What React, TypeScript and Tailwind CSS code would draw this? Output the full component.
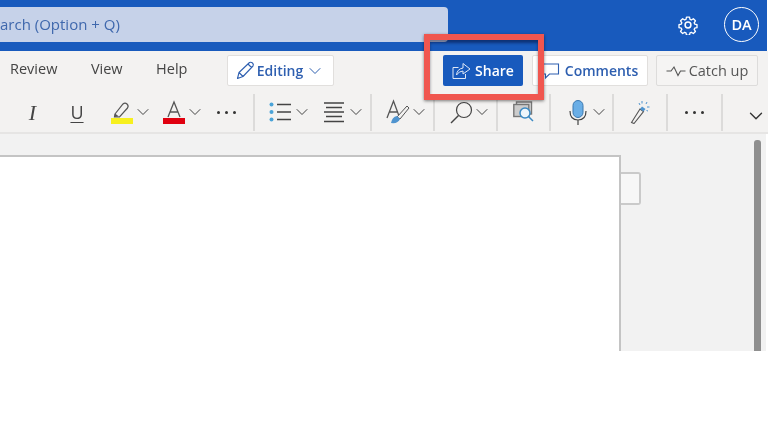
import { ReactNode } from "react";
import { ChevronDown } from "lucide-react";

const font = "font-['Open_Sans','Noto_Sans',sans-serif]";

const Chev = () => <ChevronDown size={20} strokeWidth={1.2} className="text-[#444] shrink-0" />;

const Sep = ({ className = "" }: { className?: string }) => (
  <div className={`w-[2px] h-[37px] bg-[#dcdbda] shrink-0 ${className}`} />
);

const Cell = ({ w, children }: { w: number; children: ReactNode }) => (
  <div style={{ width: w }} className="flex items-center justify-center shrink-0 h-full">
    {children}
  </div>
);

const Gap = ({ w }: { w: number }) => <div style={{ width: w }} className="shrink-0" />;

const Dots = () => (
  <div className="flex gap-[5px]">
    <span className="w-[3px] h-[3px] rounded-full bg-[#333]" />
    <span className="w-[3px] h-[3px] rounded-full bg-[#333]" />
    <span className="w-[3px] h-[3px] rounded-full bg-[#333]" />
  </div>
);

const Highlighter = () => (
  <svg width="24" height="26" viewBox="0 0 24 26" fill="none">
    <path d="M5 15 L13 5 Q15 3 17 5 Q19 7 17.500 9 L9.500 18 L4.500 18 Z" stroke="#555" strokeWidth="1.200" />
    <path d="M4.500 18 L5 14.500 L9 17.500 Z" fill="#555" />
    <rect x="1" y="19" width="22" height="6" fill="#f7f01e" />
  </svg>
);

const FontColor = () => (
  <svg width="24" height="26" viewBox="0 0 24 26" fill="none">
    <path d="M6 18 L12 3 L18 18 M8 13 L16 13" stroke="#555" strokeWidth="1.300" />
    <rect x="1" y="19" width="22" height="6" fill="#e0000f" />
  </svg>
);

const BulletList = () => (
  <svg width="23" height="20" viewBox="0 0 23 20">
    <circle cx="2.500" cy="2.500" r="2" fill="#4aa3d8" />
    <circle cx="2.500" cy="10" r="2" fill="#4aa3d8" />
    <circle cx="2.500" cy="17.500" r="2" fill="#4aa3d8" />
    <path d="M8 2.500 H22 M8 10 H22 M8 17.500 H22" stroke="#444" strokeWidth="1.300" />
  </svg>
);

const AlignLines = () => (
  <svg width="22" height="21" viewBox="0 0 22 21">
    <path d="M1 1 H21 M3 5.500 H19 M1 10 H21 M3 14.500 H19 M1 19.500 H21" stroke="#444" strokeWidth="1.300" />
  </svg>
);

const Styles = () => (
  <svg width="24" height="26" viewBox="0 0 24 26" fill="none">
    <path d="M1 19 L7.500 2 L13 17 M3.500 13 L11.500 13" stroke="#555" strokeWidth="1.300" />
    <path d="M11 18 L21 7 L23 9 L14 20 Z" stroke="#555" strokeWidth="1" fill="#f3f2f1" />
    <path d="M5 24 Q6 18 11 17 L14 20 Q12 25 5 24 Z" fill="#4f94cf" />
  </svg>
);

const Search = () => (
  <svg width="23" height="23" viewBox="0 0 23 23" fill="none">
    <circle cx="14" cy="9" r="7.500" stroke="#444" strokeWidth="1.200" />
    <path d="M8.500 14.500 L1 22" stroke="#444" strokeWidth="1.400" />
  </svg>
);

const Editor = () => (
  <svg width="22" height="22" viewBox="0 0 22 22" fill="none">
    <rect x="3.500" y="1" width="15" height="12" fill="#ddd" stroke="#777" strokeWidth="1.400" />
    <rect x="0.800" y="3.500" width="15" height="12" fill="#ccc" stroke="#777" strokeWidth="1.400" />
    <circle cx="12" cy="12" r="5" fill="#eef6fb" stroke="#3b8ac4" strokeWidth="1.500" />
    <path d="M15.500 15.500 L20 20" stroke="#3b8ac4" strokeWidth="1.500" />
  </svg>
);

const Mic = () => (
  <svg width="18" height="25" viewBox="0 0 18 25" fill="none">
    <rect x="4" y="0.500" width="10" height="17" rx="5" fill="#6aaee6" stroke="#3b78b0" />
    <path d="M1 11 Q1 20 9 20 Q17 20 17 11 M9 20 V25" stroke="#444" strokeWidth="1.200" />
  </svg>
);

const Wand = () => (
  <svg width="20" height="24" viewBox="0 0 20 24" fill="none">
    <path d="M1.500 22.500 L10 9 L13.500 11.500 L4 23.500 Z" fill="#f3f2f1" stroke="#555" strokeWidth="1.100" />
    <path d="M10 9 L12 6.500 L15.500 9 L13.500 11.500 Z" fill="#4f94cf" />
    <path d="M12 1 V3.500 M17 2 L16 4 M19.500 7 H17 M9 3 L10 5 M18 11 L16.500 10.500" stroke="#4f94cf" strokeWidth="1" />
  </svg>
);

const Gear = () => (
  <svg width="20" height="20" viewBox="0 0 24 24" fill="none" stroke="white" strokeWidth="1.800" strokeLinejoin="round">
    <path d="M10 1.500h4l.7 3.100 1.700.7 2.700-1.700 2.800 2.800-1.700 2.700.7 1.700 3.100.7v4l-3.100.7-.7 1.700 1.700 2.700-2.800 2.800-2.700-1.700-1.700.7-.7 3.100h-4l-.7-3.100-1.700-.7-2.700 1.700-2.800-2.800 1.700-2.700-.7-1.700-3.100-.7v-4l3.100-.7.7-1.700-1.700-2.700 2.800-2.800 2.700 1.700 1.700-.7z" transform="translate(1.200 1.200) scale(0.900)" />
    <circle cx="12" cy="12" r="3.500" />
  </svg>
);

const ShareIcon = () => (
  <svg width="19" height="19" viewBox="0 0 19 19" fill="none" stroke="#dfe8f6" strokeWidth="1" strokeLinejoin="round">
    <path d="M6.500 6.500 H1 V17.500 H13.500 V13" />
    <path d="M4.500 14 Q5 8 11 7 V2.500 L18 8 L11 13 V10 Q7 10 4.500 14 Z" />
  </svg>
);

const CommentIcon = () => (
  <svg width="18" height="18" viewBox="0 0 18 18" fill="none" stroke="#2e5fb0" strokeWidth="1.100">
    <path d="M1.500 2 H16.500 V12 H7.500 L3.500 16 V12 H1.500 Z" />
  </svg>
);

const Pulse = () => (
  <svg width="20" height="12" viewBox="0 0 20 12" fill="none" stroke="#555" strokeWidth="1.100">
    <path d="M0.500 6 H5 L8 2 L12 10.500 L14.500 6 H19.500" />
  </svg>
);

const Pencil = () => (
  <svg width="19" height="19" viewBox="0 0 19 19" fill="none" stroke="#2e5fb0" strokeWidth="1.100" strokeLinejoin="round">
    <path d="M1.500 17.500 L3 11.500 L13.500 1.500 Q15 0.800 16.500 2 Q18 3.500 17 5 L7 15.500 Z M3 11.500 L7 15.500 M12 3 L15.500 6.500" />
  </svg>
);

export default function App() {
  return (
    <div className={`${font} w-[768px] h-[432px] overflow-hidden relative bg-white blur-[0.4px]`}>
      {/* title bar */}
      <header className="h-[51px] bg-[#185abd] flex items-start mr-[1px]">
        <div className="w-[448px] h-[35px] mt-[7px] bg-[#c6d2e9] rounded-r-[4px] flex items-center shrink-0">
          <span className="text-[15px] text-[#3f68ad] whitespace-nowrap">arch (Option + Q)</span>
        </div>
        <div className="ml-auto mr-[8px] flex items-center gap-[26px] mt-[7px]">
          <Gear />
          <div className="w-[35px] h-[35px] rounded-full border border-white text-white text-[14.5px] font-semibold flex items-center justify-center">
            DA
          </div>
        </div>
      </header>

      {/* ribbon */}
      <section className="h-[83px] bg-[#f3f2f1] border-b-2 border-[#e6e5e4]">
        <div className="h-[40px] pt-[4px] flex items-start">
          <nav className="flex text-[14.5px] text-[#444] w-[227px] pl-[10px] pt-[3px] gap-[33.5px] shrink-0">
            <span>Review</span>
            <span>View</span>
            <span>Help</span>
          </nav>
          <button className="w-[107px] h-[31px] bg-white border border-[#e1dfdd] rounded-[2px] flex items-center justify-center gap-[2px] text-[#2e5fb0] text-[14px] font-semibold">
            <Pencil />
            <span>Editing</span>
            <ChevronDown size={20} strokeWidth={1.2} className="text-[#2e5fb0] shrink-0" />
          </button>
          <button className="ml-[109px] w-[80px] h-[31px] bg-[#185abd] rounded-[2px] flex items-center justify-center gap-[4px] text-white text-[14px] font-semibold">
            <ShareIcon />
            <span>Share</span>
          </button>
          <button className="ml-[9px] w-[116px] h-[31px] bg-white border border-[#e1dfdd] rounded-[2px] flex items-center justify-center gap-[5px] text-[#2e5fb0] text-[14px] font-semibold">
            <CommentIcon />
            <span>Comments</span>
          </button>
          <button className="ml-[8px] w-[102px] h-[31px] bg-[#f5f4f3] border border-[#dddcdb] rounded-[2px] flex items-center justify-center gap-[3px] text-[#555] text-[14.5px]">
            <Pulse />
            <span>Catch up</span>
          </button>
        </div>
        <div className="h-[41px] pt-[1px] flex items-center">
          <Gap w={14} />
          <Cell w={37}>
            <span className="font-['Liberation_Serif',serif] italic text-[22px] text-[#444]">I</span>
          </Cell>
          <Cell w={52}>
            <span className="text-[18px] text-[#444] underline underline-offset-[3px] decoration-[1px]">U</span>
          </Cell>
          <Gap w={4} />
          <Cell w={30}>
            <Highlighter />
          </Cell>
          <Cell w={12}>
            <Chev />
          </Cell>
          <Gap w={12} />
          <Cell w={26}>
            <FontColor />
          </Cell>
          <Cell w={16}>
            <Chev />
          </Cell>
          <Cell w={46}>
            <Dots />
          </Cell>
          <Sep className="ml-[4px]" />
          <Gap w={13} />
          <Cell w={24}>
            <BulletList />
          </Cell>
          <Cell w={19}>
            <Chev />
          </Cell>
          <Gap w={11} />
          <Cell w={24}>
            <AlignLines />
          </Cell>
          <Cell w={19}>
            <Chev />
          </Cell>
          <Sep className="ml-[5px]" />
          <Gap w={13} />
          <Cell w={26}>
            <Styles />
          </Cell>
          <Cell w={16}>
            <Chev />
          </Cell>
          <Sep className="ml-[6px]" />
          <Gap w={14} />
          <Cell w={24}>
            <Search />
          </Cell>
          <Cell w={18}>
            <Chev />
          </Cell>
          <Sep className="ml-[5px]" />
          <Gap w={15} />
          <Cell w={22}>
            <Editor />
          </Cell>
          <Sep className="ml-[14px]" />
          <Gap w={17} />
          <Cell w={20}>
            <Mic />
          </Cell>
          <Cell w={22}>
            <Chev />
          </Cell>
          <Sep className="ml-[2px]" />
          <Gap w={16} />
          <Cell w={20}>
            <Wand />
          </Cell>
          <Sep className="ml-[16px]" />
          <Cell w={53}>
            <Dots />
          </Cell>
          <Sep />
          <Gap w={22} />
          <div className="pt-[8px]">
            <ChevronDown size={22} strokeWidth={1.5} className="text-[#333]" />
          </div>
        </div>
      </section>

      {/* document canvas */}
      <main className="h-[217px] bg-[#f2f2f2] flex mr-[2px]">
        <div className="w-[621px] h-[196px] mt-[21px] bg-white border-t-2 border-r-2 border-[#c4c4c4] shrink-0" />
        <div className="w-[20px] h-[33px] mt-[38px] bg-[#f7f7f7] border-2 border-l-0 border-[#cacaca] rounded-r-[3px] shrink-0" />
        <div className="ml-auto mr-[5px] mt-[6px] w-[7px] h-[211px] bg-[#8f8f8f] rounded-t-[3px]" />
      </main>

      {/* highlight around the Share button */}
      <div className="absolute left-[424px] top-[34px] w-[120px] h-[66px] border-[6px] border-[#f0564f] shadow-[0_1px_3px_rgba(0,0,0,0.5),inset_0_3px_3px_rgba(0,0,30,0.45)]" />
    </div>
  );
}
